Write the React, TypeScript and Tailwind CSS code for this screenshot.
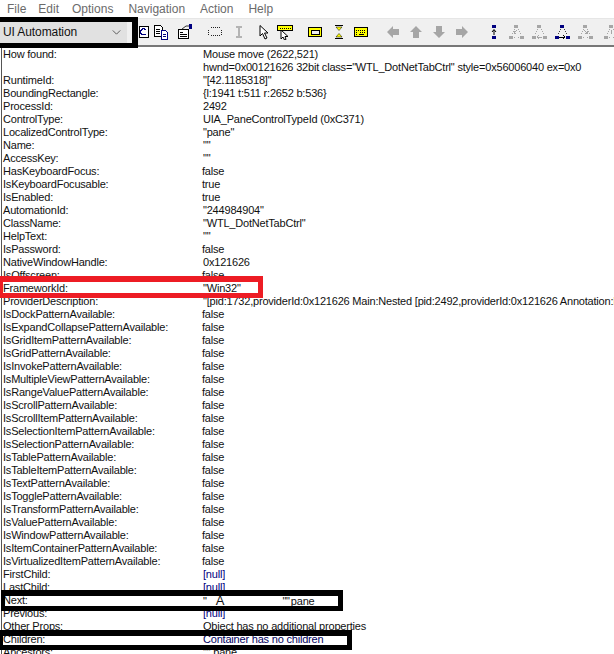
import React from "react";

const sv = (cls: string, body: React.ReactNode) => (
  <svg viewBox="0 0 16 16" shapeRendering="crispEdges" className={`w-4 h-4 shrink-0 ${cls}`}>
    {body}
  </svg>
);

const Arrow = ({ rot, cls }: { rot: number; cls: string }) =>
  sv(cls, <path d="M2 8 L8 2 V5 H14 V11 H8 V14 Z" fill="#a6a6a6" transform={`rotate(${rot} 8 8)`} shapeRendering="auto" />);

const Tree = ({ cls, blue, arrow }: { cls: string; blue?: boolean; arrow: React.ReactNode }) => {
  const c = blue ? "#000080" : "#a6a6a6";
  return sv(
    cls,
    <>
      <rect x="6" y="1" width="4" height="3" fill={c} />
      <rect x="1" y="12" width="4" height="3" fill={c} />
      <rect x="12" y="12" width="4" height="3" fill={c} />
      <path d="M6 5h1v1H6zM5 7h1v1H5zM4 9h1v1H4zM10 5h1v1h-1zM11 7h1v1h-1zM12 9h1v1h-1zM6 13h1v1H6zM10 13h1v1h-1z" fill={blue ? "#444" : "#a6a6a6"} />
      {arrow}
    </>
  );
};

const rows: [string, React.ReactNode][] = [
  ["How found:", "Mouse move (2622,521)"],
  ["", 'hwnd=0x00121626 32bit class="WTL_DotNetTabCtrl" style=0x56006040 ex=0x0'],
  ["RuntimeId:", '"[42.1185318]"'],
  ["BoundingRectangle:", "{l:1941 t:511 r:2652 b:536}"],
  ["ProcessId:", "2492"],
  ["ControlType:", "UIA_PaneControlTypeId (0xC371)"],
  ["LocalizedControlType:", '"pane"'],
  ["Name:", '""'],
  ["AccessKey:", '""'],
  ["HasKeyboardFocus:", "false"],
  ["IsKeyboardFocusable:", "true"],
  ["IsEnabled:", "true"],
  ["AutomationId:", '"244984904"'],
  ["ClassName:", '"WTL_DotNetTabCtrl"'],
  ["HelpText:", '""'],
  ["IsPassword:", "false"],
  ["NativeWindowHandle:", "0x121626"],
  ["IsOffscreen:", "false"],
  ["FrameworkId:", '"Win32"'],
  ["ProviderDescription:", '"[pid:1732,providerId:0x121626 Main:Nested [pid:2492,providerId:0x121626 Annotation:Microsoft: Annotation Proxy'],
  ...[
    "IsDock", "IsExpandCollapse", "IsGridItem", "IsGrid", "IsInvoke", "IsMultipleView", "IsRangeValue", "IsScroll", "IsScrollItem",
    "IsSelectionItem", "IsSelection", "IsTable", "IsTableItem", "IsText", "IsToggle", "IsTransform", "IsValue", "IsWindow",
    "IsItemContainer", "IsVirtualizedItem",
  ].map((n): [string, React.ReactNode] => [`${n}PatternAvailable:`, "false"]),
  ["FirstChild:", <span className="text-[#000080]">[null]</span>],
  ["LastChild:", <span className="text-[#000080]">[null]</span>],
  [
    "Next:",
    <span className="flex items-baseline">
      <span>"</span>
      <span className="ml-[9px] text-[13px] leading-[13px] tracking-normal">A</span>
      <span className="ml-[58px]">""</span>
      <span className="ml-[1px]">pane</span>
    </span>,
  ],
  ["Previous:", <span className="text-[#000080]">[null]</span>],
  ["Other Props:", "Object has no additional properties"],
  ["Children:", <span className="text-[#000060]">Container has no children</span>],
  ["Ancestors:", '"" pane'],
];

export default function App() {
  return (
    <div className="relative w-[614px] h-[654px] overflow-hidden bg-white text-[#111] font-['Liberation_Sans',Arial,sans-serif]">
      <div className="h-[18px] flex items-center text-[12px] text-[#6b6b6b] bg-white">
        <span className="ml-[7px]">File</span>
        <span className="ml-[12px]">Edit</span>
        <span className="ml-[13px]">Options</span>
        <span className="ml-[15px]">Navigation</span>
        <span className="ml-[15px]">Action</span>
        <span className="ml-[15px]">Help</span>
      </div>

      <div className="h-[29px] flex items-center bg-[#f0f0f0] border-b-[2px] border-[#777] border-t border-t-[#e6e6e6]">
        <div className="w-[127px] h-[21px] shrink-0 bg-[#e1e1e1] flex items-center justify-between pl-[3px] pr-[6px] text-[12px] tracking-[-0.1px] text-[#111]">
          <span>UI Automation</span>
          <svg viewBox="0 0 10 6" className="w-[9px] h-[5px]">
            <path d="M0.5 0.5 L5 5 L9.5 0.5" fill="none" stroke="#444" strokeWidth="1" />
          </svg>
        </div>

        {sv("ml-[7px]", <>
          <path d="M5.5 2.5h9v11h-9z" fill="#fff" stroke="#000" />
          <path d="M12 6a3 3 0 1 0-.5 4" fill="none" stroke="#000080" strokeWidth="1.4" />
        </>)}
        {sv("ml-[3px]", <>
          <path d="M1.5 1.5h6l2 2v9h-8z" fill="#fff" stroke="#000" />
          <path d="M3 5h4M3 7h4M3 9h4" stroke="#000" />
          <path d="M8.5 6.5h4l2 2v7h-6z" fill="#fff" stroke="#000080" />
          <path d="M10 10h3M10 12h3" stroke="#000080" />
        </>)}
        {sv("ml-[8px]", <>
          <path d="M1.5 5.5h10v9h-10z" fill="#fff" stroke="#000" />
          <path d="M3 8h3M3 10h7M3 12h7" stroke="#000" />
          <path d="M5 5 L9 2 H13" fill="none" stroke="#333" shapeRendering="auto" />
          <path d="M12 0h3v5h-3z" fill="#000080" />
        </>)}
        {sv("ml-[14px]", <path d="M3.5 3.5h9M3.5 11.5h9M1.5 5.5v5M14.5 5.5v5" fill="none" stroke="#222" strokeDasharray="1 1" />)}
        {sv("ml-[8px]", <path d="M5 3h6M5 13h6M8 3v10" fill="none" stroke="#b4b4b4" strokeWidth="1.2" />)}
        {sv("ml-[8px]", <path d="M5 1.5V12l2.5-2.5L10 15l2-1-2.5-5H13z" fill="#fff" stroke="#000" shapeRendering="auto" />)}
        {sv("ml-[6px]", <>
          <rect x="0.5" y="1.5" width="15" height="5" fill="#ffff00" stroke="#000" />
          <path d="M3 4h1M5 4h1M7 4h1M9 4h1M11 4h1M13 4h1" stroke="#000" />
          <path d="M4 6V15l2-2 1.5 3 1.5-.5L8 12.5h3z" fill="#fff" stroke="#000" shapeRendering="auto" />
        </>)}
        {sv("ml-[14px]", <>
          <rect x="1" y="3" width="14" height="10" fill="#000" />
          <rect x="2" y="4" width="12" height="8" fill="#ffff00" />
          <rect x="4" y="6" width="8" height="4" fill="#f0f0f0" stroke="#000" strokeWidth="1" />
        </>)}
        {sv("ml-[8px]", <>
          <path d="M4 1h8v1H4zM4 14h8v1H4z" fill="#000" />
          <path d="M5 3h6L8 6.5z" fill="#ffff00" stroke="#000" strokeWidth="0.5" shapeRendering="auto" />
          <path d="M5 13h6L8 9.5z" fill="#ffff00" stroke="#000" strokeWidth="0.5" shapeRendering="auto" />
        </>)}
        {sv("ml-[6px]", <>
          <rect x="1.5" y="3.5" width="13" height="9" fill="#ffff00" stroke="#000" />
          <path d="M3 6h1M5 6h1M7 6h1M9 6h1M11 6h1M3 8h1M7 8h1M9 8h1M11 8h1M3 10h1M6 10h5" stroke="#000" />
        </>)}

        <Arrow rot={0} cls="ml-[16px]" />
        <Arrow rot={90} cls="ml-[7px]" />
        <Arrow rot={-90} cls="ml-[7px]" />
        <Arrow rot={180} cls="ml-[7px]" />

        {sv("ml-[16px]", <>
          <rect x="6" y="1" width="4" height="3" fill="#000080" />
          <rect x="6" y="12" width="4" height="3" fill="#000080" />
          <path d="M8 11V6M6 8l2-2.5L10 8" fill="none" stroke="#000" shapeRendering="auto" />
        </>)}
        <Tree cls="ml-[6px]" arrow={<path d="M6 9l3-3M6 7v2h2" fill="none" stroke="#a6a6a6" />} />
        <Tree cls="ml-[7px]" arrow={<path d="M6 13h5M8 11l-2 2 2 2" fill="none" stroke="#a6a6a6" />} />
        <Tree cls="ml-[7px]" blue arrow={<path d="M5 13h6M9 11l2 2-2 2" fill="none" stroke="#000" />} />
        <Tree cls="ml-[7px]" arrow={<path d="M7 6l3 3M10 7v2H8" fill="none" stroke="#a6a6a6" />} />
        <Tree cls="ml-[10px]" arrow={<path d="M8 6v4" fill="none" stroke="#a6a6a6" />} />
      </div>

      <div className="h-[607px] overflow-hidden ml-[1px] border-l border-[#555] pt-[1px] pl-[1px] text-[11px] tracking-[-0.2px] leading-[13px]">
        {rows.map(([label, value], i) => (
          <div key={i} className="flex h-[13px] whitespace-nowrap">
            <div className="w-[200px] shrink-0">{label}</div>
            <div className={value === "false" || value === "true" ? "-ml-[1px]" : ""}>{value}</div>
          </div>
        ))}
      </div>

      <div className="absolute left-[-6px] top-[17px] w-[144px] h-[31px] border-x-[6px] border-y-[5px] border-black" />
      <div className="absolute left-0 top-[276px] w-[263px] h-[22px] border-l-[3px] border-l-[#ed1c24] border-r-[5px] border-r-[#ed1c24] border-t-[6px] border-b-[5px] border-y-[#ed1c24]" />
      <div className="absolute left-[1px] top-[590px] w-[342px] h-[21px] border-l-[4px] border-r-[5px] border-t-[6px] border-b-[5px] border-black" />
      <div className="absolute left-0 top-[630px] w-[352px] h-[20px] border-l-[3px] border-r-[5px] border-t-[6px] border-b-[5px] border-black" />
    </div>
  );
}
